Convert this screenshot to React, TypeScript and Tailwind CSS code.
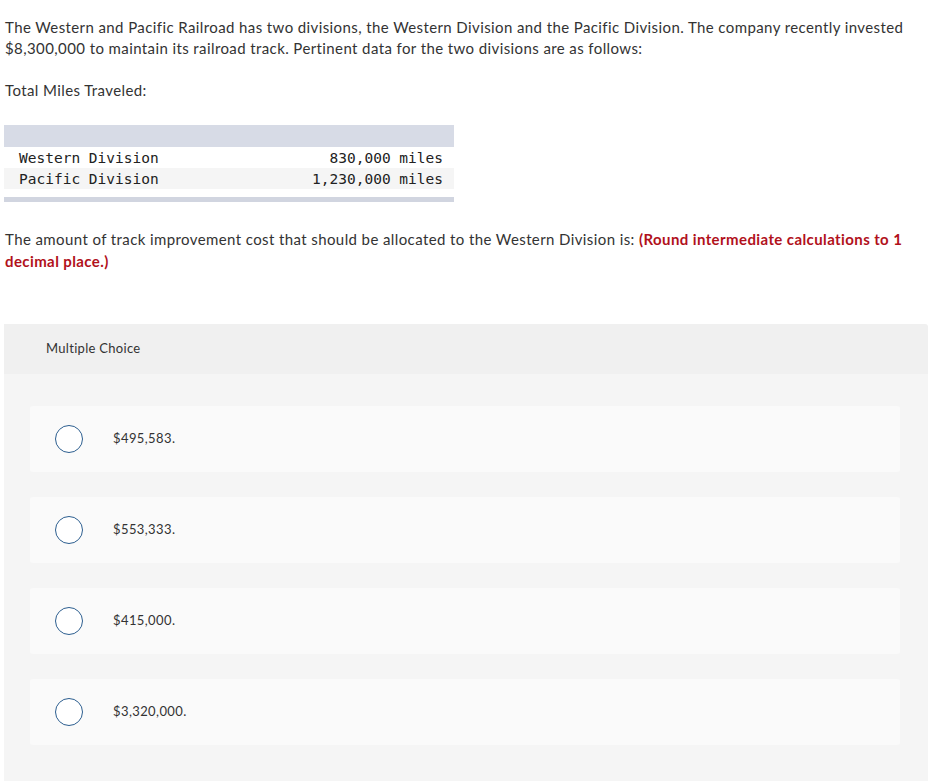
import { type FC } from 'react';

const options = ['$495,583.', '$553,333.', '$415,000.', '$3,320,000.'];

const Radio: FC = () => (
  <div className="w-[28px] h-[28px] rounded-full border-[1.5px] border-[#2c5e8f] bg-white shrink-0" />
);

export default function App() {
  return (
    <div className="bg-white min-h-[781px] font-['Lato','Open_Sans',sans-serif] text-[#333] pt-[17px]">
      <p className="pl-[5px] pr-[20px] text-[15px] leading-[21px] tracking-[0.4px]">
        The Western and Pacific Railroad has two divisions, the Western Division and the Pacific Division. The company recently invested $8,300,000 to maintain its railroad track. Pertinent data for the two divisions are as follows:
      </p>
      <p className="px-[5px] text-[15px] leading-[21px] mt-[21px] tracking-[0.4px]">Total Miles Traveled:</p>

      <div className="ml-[4px] mt-[24px] w-[450px] font-['DejaVu_Sans_Mono',monospace] text-[14.5px] text-[#222]">
        <div className="h-[22px] bg-[#d7dbe6]" />
        <div className="h-[21px] flex items-center justify-between pt-[2px] pl-[15px] pr-[11px] bg-white">
          <span>Western Division</span>
          <span>830,000 miles</span>
        </div>
        <div className="h-[21px] flex items-center justify-between pt-[2px] pl-[15px] pr-[11px] bg-[#f5f5f5]">
          <span>Pacific Division</span>
          <span>1,230,000 miles</span>
        </div>
        <div className="h-[5px] mt-[8px] bg-[#d1d5e0]" />
      </div>

      <p className="pl-[5px] pr-[30px] text-[15px] leading-[22px] mt-[26px] tracking-[0.4px]">
        The amount of track improvement cost that should be allocated to the Western Division is:{' '}
        <span className="font-bold text-[#b1111b]">(Round intermediate calculations to 1 decimal place.)</span>
      </p>

      <div className="ml-[4px] mt-[52px] w-[924px] rounded-tr-[3px] overflow-hidden">
        <div className="h-[50px] bg-[#f0f0f0] flex items-center pl-[42px] text-[13px] tracking-[0.3px] text-[#333]">
          Multiple Choice
        </div>
        <div className="bg-[#f5f5f5] pt-[32px] pb-[40px] pl-[26px] pr-[28px] flex flex-col gap-[25px]">
          {options.map((o) => (
            <div key={o} className="h-[66px] bg-[#fafafa] rounded-[3px] flex items-center pl-[25px]">
              <Radio />
              <span className="ml-[30px] text-[13px] tracking-[0.4px] text-[#333]">{o}</span>
            </div>
          ))}
        </div>
      </div>
    </div>
  );
}
